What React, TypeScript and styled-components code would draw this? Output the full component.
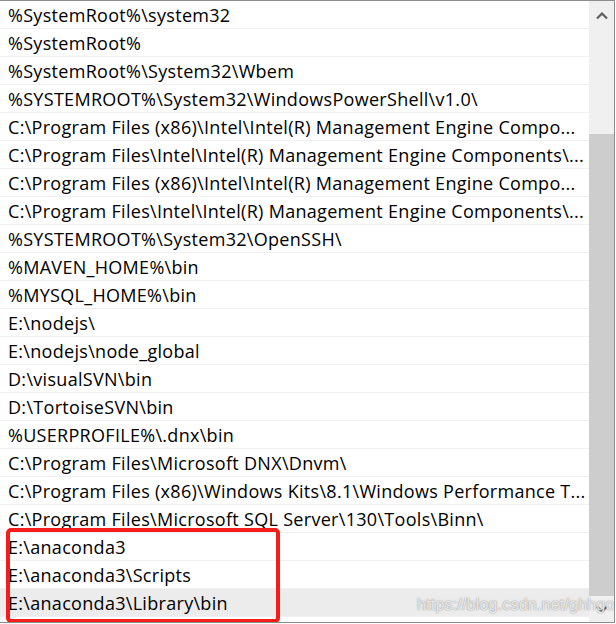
import { FC } from 'react'
import styled, { createGlobalStyle } from 'styled-components'

const GlobalStyle = createGlobalStyle`
  html, body {
    margin: 0;
    padding: 0;
    background: #ffffff;
  }
  body {
    font-family: 'Open Sans', 'Noto Sans', sans-serif;
  }
`

const paths: string[] = [
  '%SystemRoot%\\system32',
  '%SystemRoot%',
  '%SystemRoot%\\System32\\Wbem',
  '%SYSTEMROOT%\\System32\\WindowsPowerShell\\v1.0\\',
  'C:\\Program Files (x86)\\Intel\\Intel(R) Management Engine Compo...',
  'C:\\Program Files\\Intel\\Intel(R) Management Engine Components\\...',
  'C:\\Program Files (x86)\\Intel\\Intel(R) Management Engine Compo...',
  'C:\\Program Files\\Intel\\Intel(R) Management Engine Components\\...',
  '%SYSTEMROOT%\\System32\\OpenSSH\\',
  '%MAVEN_HOME%\\bin',
  '%MYSQL_HOME%\\bin',
  'E:\\nodejs\\',
  'E:\\nodejs\\node_global',
  'D:\\visualSVN\\bin',
  'D:\\TortoiseSVN\\bin',
  '%USERPROFILE%\\.dnx\\bin',
  'C:\\Program Files\\Microsoft DNX\\Dnvm\\',
  'C:\\Program Files (x86)\\Windows Kits\\8.1\\Windows Performance T...',
  'C:\\Program Files\\Microsoft SQL Server\\130\\Tools\\Binn\\',
  'E:\\anaconda3',
  'E:\\anaconda3\\Scripts',
  'E:\\anaconda3\\Library\\bin',
]

const selectedIndex = 21

const Frame = styled.div`
  position: relative;
  box-sizing: border-box;
  width: 615px;
  height: 623px;
  border: 1px solid #8c8c8c;
  border-left: none;
  display: flex;
  overflow: hidden;
  background: #ffffff;
`

const List = styled.ul`
  flex: 1;
  margin: 0;
  padding: 0;
  list-style: none;
  overflow: hidden;
`

const Row = styled.li<{ selected?: boolean }>`
  box-sizing: border-box;
  height: 28px;
  padding: 0 0 0 8px;
  border-bottom: 1px solid #f0f0f0;
  display: flex;
  align-items: center;
  font-size: 18px;
  letter-spacing: 0.3px;
  color: #000000;
  white-space: nowrap;
  overflow: hidden;
  background: ${(p) => (p.selected ? '#ececec' : '#ffffff')};
`

const ScrollBar = styled.div`
  width: 25px;
  background: #f0f0f0;
  display: flex;
  flex-direction: column;
`

const ArrowButton = styled.div<{ h: number }>`
  height: ${(p) => p.h}px;
  display: flex;
  align-items: center;
  justify-content: center;
  flex-shrink: 0;
`

const Track = styled.div`
  flex: 1;
  display: flex;
  flex-direction: column;
  justify-content: flex-end;
`

const Thumb = styled.div`
  background: #cdcdcd;
`

const Highlight = styled.div`
  position: absolute;
  left: 6px;
  top: 527px;
  width: 274px;
  height: 95px;
  box-sizing: border-box;
  border: 4px solid #f61c1c;
  border-radius: 5px;
  pointer-events: none;
`

const Watermark = styled.div`
  position: absolute;
  left: 417px;
  top: 595px;
  font-family: 'Liberation Sans', Arial, sans-serif;
  font-size: 16px;
  letter-spacing: 0.2px;
  color: rgba(255, 255, 255, 0.8);
  text-shadow: 0 0 1px rgba(110, 110, 110, 0.7), 0 0 2px rgba(140, 140, 140, 0.5);
  white-space: nowrap;
  pointer-events: none;
`

const Chevron: FC<{ down?: boolean }> = ({ down }) => (
  <svg width="12" height="8" viewBox="0 0 12 8">
    <path
      d={down ? 'M1 1.5 L6 6.5 L11 1.5' : 'M1 6.5 L6 1.5 L11 6.5'}
      fill="none"
      stroke="#606060"
      strokeWidth="2.2"
    />
  </svg>
)

const App: FC = () => {
  const thumbHeight = 462

  return (
    <>
      <GlobalStyle />
      <Frame>
        <List>
          {paths.map((item, index) => (
            <Row key={index} selected={index === selectedIndex}>
              {item}
            </Row>
          ))}
        </List>
        <ScrollBar>
          <ArrowButton h={30}>
            <Chevron />
          </ArrowButton>
          <Track>
            <Thumb style={{ height: thumbHeight }} />
          </Track>
          <ArrowButton h={26}>
            <Chevron down />
          </ArrowButton>
        </ScrollBar>
        <Highlight />
        <Watermark>https://blog.csdn.net/ghhgo</Watermark>
      </Frame>
    </>
  )
}

export default App
